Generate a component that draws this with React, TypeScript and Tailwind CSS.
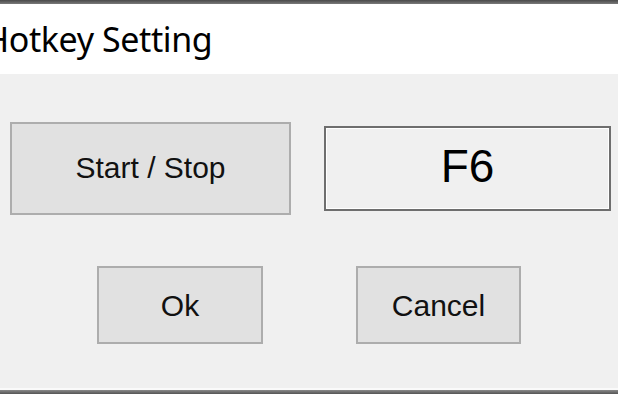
const btn =
  "flex items-center justify-center bg-[#e1e1e1] border-2 border-[#adadad] text-[#111] text-[30px] font-['Liberation_Sans',Arial,sans-serif]";

export default function App() {
  return (
    <div className="w-[618px] h-[394px] flex flex-col overflow-hidden bg-[#f0f0f0]">
      {/* window frame top */}
      <div className="h-[4px] bg-gradient-to-b from-[#4a4a4a] to-[#7a7a7a]" />

      {/* title bar */}
      <div className="h-[70px] bg-white flex items-center">
        <span className="ml-[-16px] text-[34px] tracking-[-0.4px] text-black font-['Noto_Sans','Open_Sans',sans-serif]">
          Hotkey Setting
        </span>
      </div>

      {/* body */}
      <div className="flex-1 flex flex-col">
        <div className="flex items-center mt-[48px] ml-[10px] gap-[33px]">
          <button className={`${btn} w-[281px] h-[93px] pb-[2px]`}>Start / Stop</button>
          <div className="w-[287px] h-[85px] border-2 border-[#6e6e6e] bg-white p-[1px]">
            <div className="w-full h-full bg-[#f0f0f0] flex items-center justify-center text-[46px] text-black font-['Liberation_Sans',Arial,sans-serif] pb-[4px]">
              F6
            </div>
          </div>
        </div>

        <div className="flex mt-[51px] ml-[97px] gap-[93px]">
          <button className={`${btn} w-[166px] h-[78px]`}>Ok</button>
          <button className={`${btn} w-[165px] h-[78px]`}>Cancel</button>
        </div>
      </div>

      {/* window frame bottom */}
      <div className="h-[2px] bg-[#fafafa]" />
      <div className="h-[4px] bg-gradient-to-b from-[#8a8a8a] to-[#555555]" />
    </div>
  );
}
